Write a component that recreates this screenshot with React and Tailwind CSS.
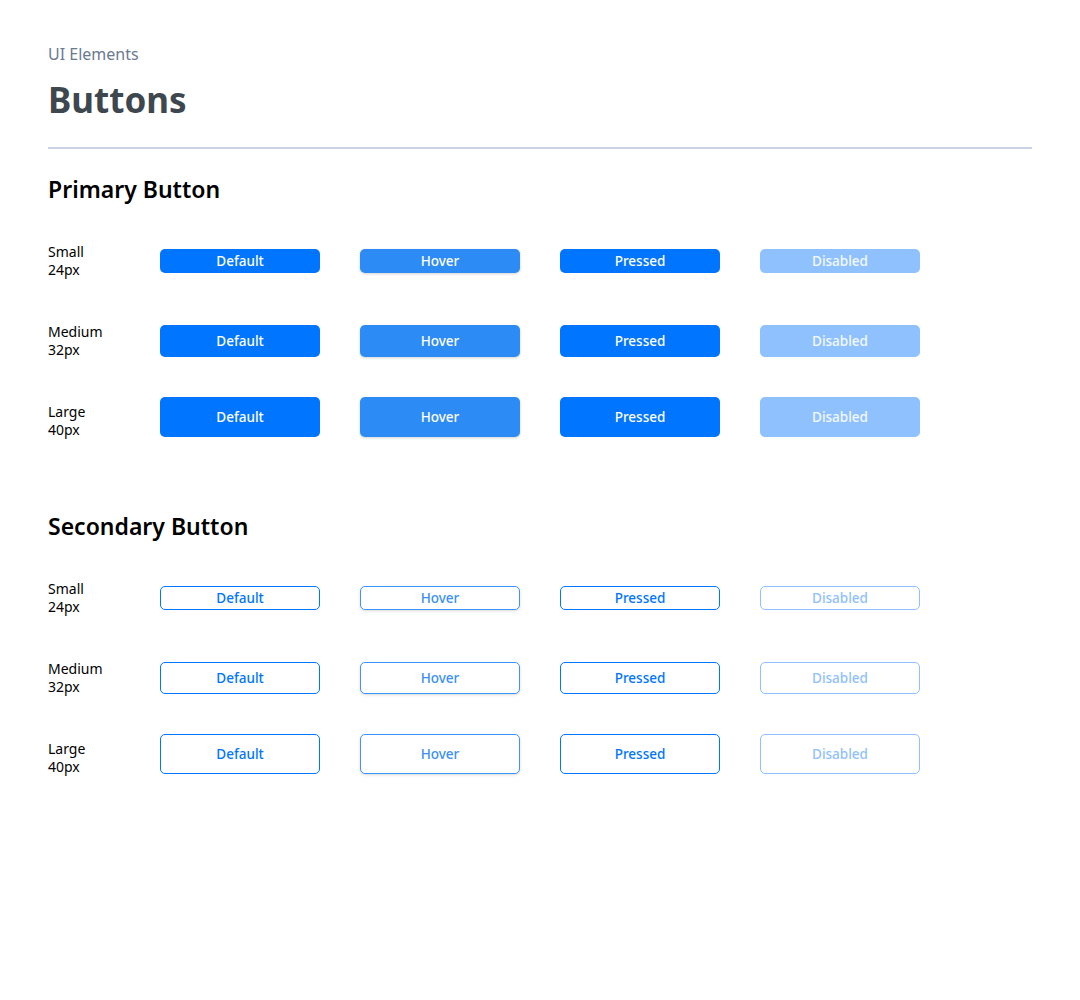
import React from "react";

const STATES = ["Default", "Hover", "Pressed", "Disabled"];

const SIZES = [
  { name: "Small", px: "24px", h: "h-6", rowTop: "", labelMt: "mt-0", btnMt: "mt-[6px]" },
  { name: "Medium", px: "32px", h: "h-8", rowTop: "mt-[44px]", labelMt: "mt-0", btnMt: "mt-[2px]" },
  { name: "Large", px: "40px", h: "h-10", rowTop: "mt-[38px]", labelMt: "mt-[6px]", btnMt: "mt-0" },
];

const PRIMARY = {
  Default: "bg-[#0075ff] text-white",
  Hover: "bg-[#2d8bf6] text-white shadow-[0_1px_3px_rgba(0,0,0,0.18)]",
  Pressed: "bg-[#0075ff] text-white",
  Disabled: "bg-[#8fc1fe] text-white/90",
};

const SECONDARY = {
  Default: "bg-white border border-[#0075ff] text-[#0075ff]",
  Hover: "bg-white border border-[#3b95f7] text-[#3b8ff5] shadow-[0_1px_3px_rgba(0,0,0,0.15)]",
  Pressed: "bg-white border border-[#0075ff] text-[#0075ff]",
  Disabled: "bg-white border border-[#8fc1fe] text-[#8fc1fe]",
};

function Button({ label, size, styles }) {
  return (
    <button
      type="button"
      className={`w-40 ${size.h} rounded-[5px] flex items-center justify-center text-[13.5px] leading-5 font-medium ${styles[label]}`}
    >
      {label}
    </button>
  );
}

function Section({ title, styles, className = "" }) {
  return (
    <section className={className}>
      <h2 className="text-[23px] leading-7 font-semibold text-black">{title}</h2>
      <div className="mt-10">
        {SIZES.map((size) => (
          <div key={size.name} className={`flex items-start ${size.rowTop}`}>
            <div className={`w-28 text-[14px] leading-[18px] text-black ${size.labelMt}`}>
              <div>{size.name}</div>
              <div>{size.px}</div>
            </div>
            <div className={`flex gap-10 ${size.btnMt}`}>
              {STATES.map((s) => (
                <Button key={s} label={s} size={size} styles={styles} />
              ))}
            </div>
          </div>
        ))}
      </div>
    </section>
  );
}

export default function App() {
  return (
    <div
      className="w-[1080px] h-[1000px] bg-white px-12 pt-[44px]"
      style={{ fontFamily: '"Noto Sans", "Open Sans", sans-serif' }}
    >
      <div className="text-[16px] leading-5 text-[#6b7a90]">UI Elements</div>
      <h1 className="mt-[14px] text-[35px] leading-[44px] font-bold text-[#3e464e]">Buttons</h1>
      <div className="mt-[25px] h-[2px] bg-[#c9d3e6]" />
      <Section title="Primary Button" styles={PRIMARY} className="mt-[26px]" />
      <Section title="Secondary Button" styles={SECONDARY} className="mt-[73px]" />
    </div>
  );
}
